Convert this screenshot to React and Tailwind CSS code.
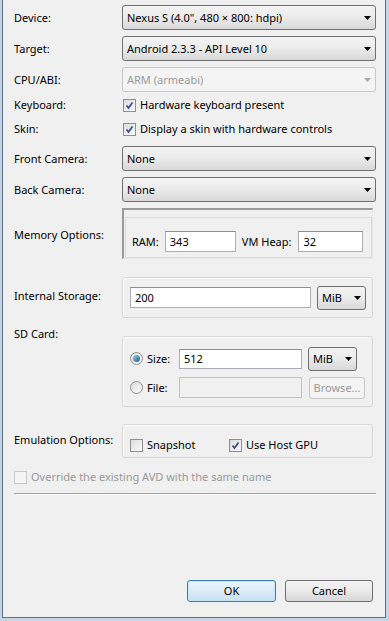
import React from 'react';

const font = { fontFamily: '"Noto Sans", "Liberation Sans", sans-serif' };

const Arrow = ({ disabled }) => (
  <svg width="7" height="4" viewBox="0 0 7 4" className="shrink-0">
    <path d="M0 0 H7 L3.5 4 Z" fill={disabled ? '#a8a8a8' : '#000'} />
  </svg>
);

const Combo = ({ value, disabled, className = '' }) => (
  <div
    className={
      'flex items-center justify-between rounded-[3px] border pl-[4px] pr-[4px] ' +
      (disabled
        ? 'border-[#c5c9cc] bg-[#f4f4f4] text-[#9a9a9a] '
        : 'border-[#707070] bg-gradient-to-b from-[#f3f3f3] via-[#ebebeb] to-[#d8d8d8] text-black ') +
      className
    }
  >
    <span className="truncate">{value}</span>
    <Arrow disabled={disabled} />
  </div>
);

const TextBox = ({ value, disabled, className = '' }) => (
  <div
    className={
      'flex shrink-0 items-center border pl-[4px] ' +
      (disabled ? 'border-[#c3c3c3] bg-[#f0f0f0]' : 'border-[#abadb3] border-t-[#8e9096] bg-white') +
      ' ' + className
    }
  >
    {value}
  </div>
);

const Check = ({ checked, disabled }) => (
  <span
    className={
      'flex h-[13px] w-[13px] shrink-0 items-center justify-center border ' +
      (disabled ? 'border-[#c7c7c7] bg-[#f4f4f4]' : 'border-[#8e8f8f] bg-gradient-to-br from-[#dcdcdc] to-[#fbfbfb]')
    }
  >
    {checked && (
      <svg width="9" height="9" viewBox="0 0 9 9">
        <path d="M1.5 4.5 L3.5 7 L7.5 1.5" stroke="#3a4f8c" strokeWidth="1.8" fill="none" />
      </svg>
    )}
  </span>
);

const Radio = ({ checked }) => (
  <span className="flex h-[13px] w-[13px] shrink-0 items-center justify-center rounded-full border border-[#8e8f8f] bg-gradient-to-br from-[#dcdcdc] to-[#fbfbfb]">
    {checked && <span className="h-[7px] w-[7px] rounded-full bg-gradient-to-br from-[#8fd3f0] to-[#1b5c8e]" />}
  </span>
);

const Label = ({ children, className = '' }) => (
  <div className={'w-[108px] shrink-0 whitespace-nowrap ' + className}>{children}</div>
);

const ComboRow = ({ label, value, disabled, className = '' }) => (
  <div className={'flex items-center ' + className}>
    <Label>{label}</Label>
    <Combo value={value} disabled={disabled} className="h-[25px] flex-1" />
  </div>
);

export default function App() {
  return (
    <div className="h-[621px] w-[389px] bg-[#c4d5e8] pb-[3px] pl-[2px] pr-[3px]" style={font}>
      <div className="flex h-full flex-col whitespace-nowrap border-x border-b border-[#5f6e80] bg-[#f0f0f0] pl-[11px] pr-[9px] text-[11px] leading-[16px] text-black">
        <ComboRow label="Device:" value={'Nexus S (4.0", 480 \u00d7 800: hdpi)'} className="mt-[5px]" />
        <ComboRow label="Target:" value="Android 2.3.3 - API Level 10" className="mt-[6px]" />
        <ComboRow label="CPU/ABI:" value="ARM (armeabi)" disabled className="mt-[6px]" />

        <div className="mt-[5px] flex h-[16px] items-center">
          <Label>Keyboard:</Label>
          <div className="flex items-center gap-[4px] pl-[1px]">
            <Check checked />
            <span>Hardware keyboard present</span>
          </div>
        </div>
        <div className="mt-[8px] flex h-[16px] items-center">
          <Label>Skin:</Label>
          <div className="flex items-center gap-[4px] pl-[1px]">
            <Check checked />
            <span>Display a skin with hardware controls</span>
          </div>
        </div>

        <ComboRow label="Front Camera:" value="None" className="mt-[9px]" />
        <ComboRow label="Back Camera:" value="None" className="mt-[6px]" />

        <div className="mt-[6px] flex items-center">
          <Label className="pt-[3px]">Memory Options:</Label>
          <div className="mr-[3px] flex h-[51px] flex-1 flex-col border-b border-l-2 border-r border-t-2 border-[#9a9a9a] border-b-[#e6e6e6] border-r-[#e6e6e6] pl-[1px] pt-[7px]">
            <div className="flex flex-1 items-end border border-[#dadada] bg-[#f0f0f0] pb-[5px] pl-[6px]">
              <div className="flex h-[21px] items-center gap-[6px]">
                <span>RAM:</span>
                <TextBox value="343" className="h-[21px] w-[71px]" />
              </div>
              <div className="ml-[6px] flex h-[21px] items-center gap-[7px]">
                <span>VM Heap:</span>
                <TextBox value="32" className="h-[21px] w-[65px]" />
              </div>
            </div>
          </div>
        </div>

        <div className="mt-[18px] flex items-center">
          <Label className="-mt-[4px]">Internal Storage:</Label>
          <div className="mr-[3px] flex h-[41px] flex-1 items-center gap-[6px] rounded-[3px] border border-[#d5d5d5] pl-[7px] shadow-[inset_1px_1px_0_#fff]">
            <TextBox value="200" className="h-[21px] w-[181px]" />
            <Combo value="MiB" className="h-[24px] w-[49px]" />
          </div>
        </div>

        <div className="mt-[8px] flex items-start">
          <Label>SD Card:</Label>
          <div className="mr-[3px] mt-[10px] flex h-[71px] flex-1 flex-col rounded-[3px] border border-[#d5d5d5] pl-[7px] pt-[11px] shadow-[inset_1px_1px_0_#fff]">
            <div className="flex h-[21px] items-center">
              <div className="flex w-[49px] items-center gap-[4px]">
                <Radio checked />
                <span>Size:</span>
              </div>
              <TextBox value="512" className="h-[20px] w-[123px]" />
              <Combo value="MiB" className="ml-[6px] h-[24px] w-[49px]" />
            </div>
            <div className="mt-[8px] flex h-[21px] items-center">
              <div className="flex w-[49px] items-center gap-[4px]">
                <Radio />
                <span>File:</span>
              </div>
              <TextBox value="" disabled className="h-[21px] w-[123px]" />
              <div className="ml-[7px] flex h-[22px] w-[56px] items-center justify-center rounded-[3px] border border-[#c5c5c5] bg-[#f4f4f4] text-[#9a9a9a]">
                Browse...
              </div>
            </div>
          </div>
        </div>

        <div className="mt-[17px] flex items-center">
          <Label className="-mt-[2px]">Emulation Options:</Label>
          <div className="mr-[3px] flex h-[34px] flex-1 items-center rounded-[3px] border border-[#d5d5d5] pl-[7px] pt-[8px] shadow-[inset_1px_1px_0_#fff]">
            <div className="flex w-[99px] items-center gap-[4px]">
              <Check />
              <span>Snapshot</span>
            </div>
            <div className="flex items-center gap-[4px]">
              <Check checked />
              <span>Use Host GPU</span>
            </div>
          </div>
        </div>

        <div className="mt-[11px] flex h-[16px] items-center gap-[4px] text-[#9a9a9a]">
          <Check disabled />
          <span>Override the existing AVD with the same name</span>
        </div>

        <div className="mt-[8px] border-b border-t border-[#a0a0a0] border-b-white" />

        <div className="mb-[15px] mt-auto flex justify-end gap-[9px] pr-[3px]">
          <div className="flex h-[22px] w-[89px] items-center justify-center rounded-[3px] border border-[#3c7fb1] bg-gradient-to-b from-[#ecf6fc] via-[#dcecf8] to-[#c4e0f3] shadow-[inset_0_0_0_1px_#c2e4f6]">
            OK
          </div>
          <div className="flex h-[22px] w-[88px] items-center justify-center rounded-[3px] border border-[#707070] bg-gradient-to-b from-[#f3f3f3] via-[#ebebeb] to-[#d6d6d6]">
            Cancel
          </div>
        </div>
      </div>
    </div>
  );
}
